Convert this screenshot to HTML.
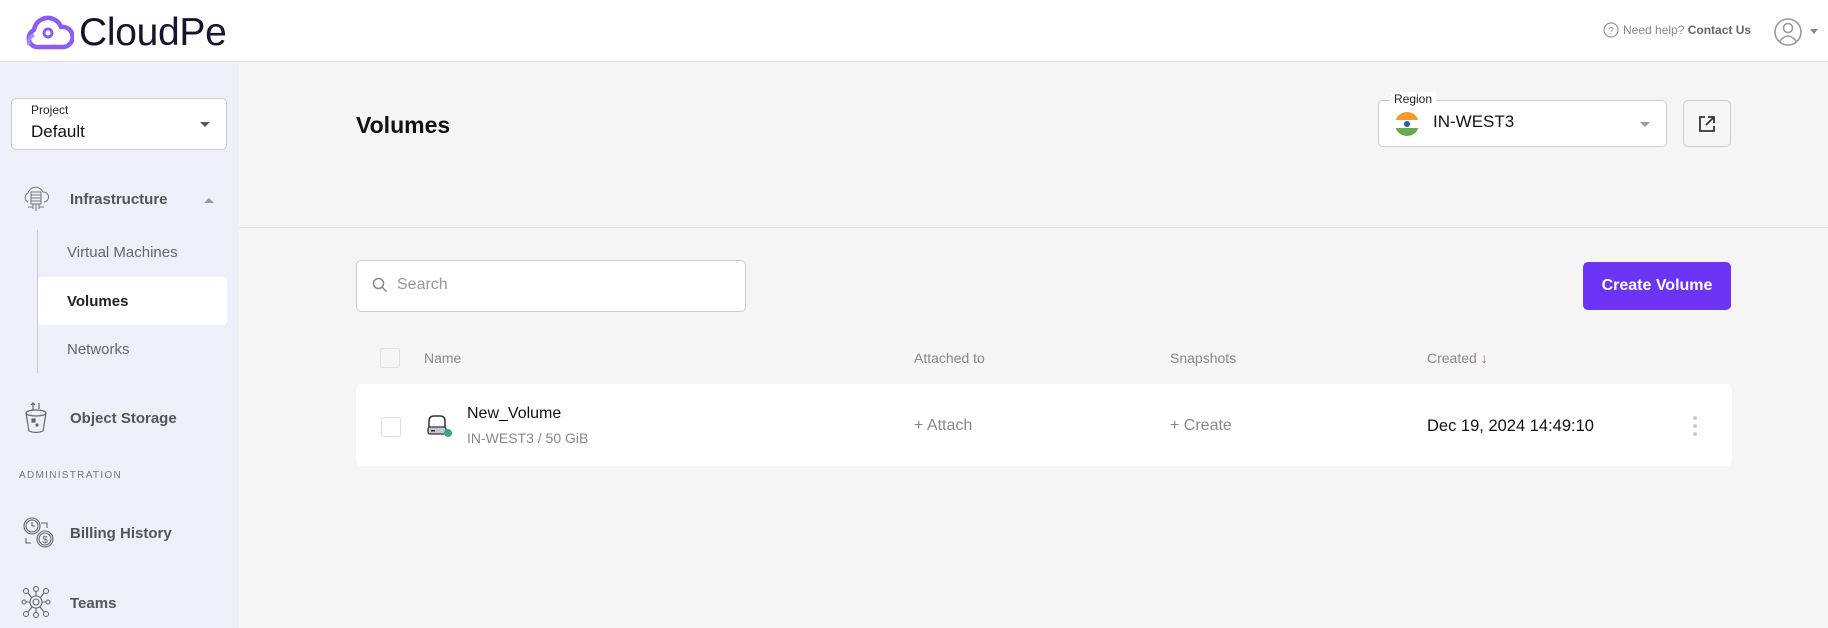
<!DOCTYPE html>
<html><head><meta charset="utf-8"><style>
*{box-sizing:border-box;margin:0;padding:0}
body{width:1828px;height:628px;overflow:hidden;background:#f5f5f5;font-family:"Liberation Sans",sans-serif;position:relative;color:#111}
.a{position:absolute;white-space:nowrap}
.hdr{left:0;top:0;width:1828px;height:62px;background:#fff;border-bottom:1px solid #e3e3e3}
.side{left:0;top:62px;width:239px;height:566px;background:#edf0fb}
.nav{font-size:15px;color:#555;font-weight:bold}
.sub{font-size:15px;color:#666}
.th{font-size:14px;color:#888;top:350px}
.cb{width:20px;height:20px;border:1px solid #dde0ea;border-radius:3px;background:#fff}
</style></head><body>
<div class="a hdr"></div>
<svg class="a" style="left:24px;top:15px" width="50" height="36" viewBox="0 0 50 36"><path d="M12 32 A9 9 0 0 1 10 15 A14 14 0 0 1 37 12 A10 10 0 0 1 40 32 Z" fill="none" stroke="#8b5cf6" stroke-width="4.5" stroke-linejoin="round"/><path d="M5 30 A8 8 0 0 1 10 20" fill="none" stroke="#a78bfa" stroke-width="3.5"/><circle cx="24" cy="18" r="4" fill="none" stroke="#8b5cf6" stroke-width="3"/></svg>
<div class="a" style="left:79px;top:11px;font-size:39px;color:#14142e;letter-spacing:-0.3px">CloudPe</div>
<svg class="a" style="left:1603px;top:22px" width="16" height="16"><circle cx="8" cy="8" r="7" fill="none" stroke="#999" stroke-width="1.2"/><text x="8" y="12" font-size="10" text-anchor="middle" fill="#999" font-family="Liberation Sans">?</text></svg>
<div class="a" style="left:1623px;top:23px;font-size:12px;color:#888">Need help? <b style="color:#666">Contact Us</b></div>
<svg class="a" style="left:1772px;top:16px" width="32" height="32"><circle cx="16" cy="16" r="13" fill="none" stroke="#999" stroke-width="1.6"/><circle cx="16" cy="12" r="4.5" fill="none" stroke="#999" stroke-width="1.6"/><path d="M8 25 Q16 15 24 25" fill="none" stroke="#999" stroke-width="1.6"/></svg>
<div class="a" style="left:1810px;top:29px;border:4px solid transparent;border-top:5px solid #888"></div>

<div class="a side"></div>
<div class="a" style="left:11px;top:98px;width:216px;height:52px;background:#fff;border:1px solid #ccc;border-radius:5px"></div>
<div class="a" style="left:31px;top:103px;font-size:12px;color:#222">Project</div>
<div class="a" style="left:31px;top:122px;font-size:17px;color:#111">Default</div>
<div class="a" style="left:200px;top:122px;border:5px solid transparent;border-top:5px solid #555"></div>

<svg class="a" style="left:22px;top:185px" width="28" height="30" viewBox="0 0 28 30" fill="none" stroke="#777" stroke-width="1"><path d="M6 17 A5 5 0 0 1 6 8 A8 8 0 0 1 21 7 A5 5 0 0 1 22 17"/><rect x="9" y="7" width="10" height="12"/><path d="M9 10h10M9 13h10M9 16h10M11 19v5M14 19v7M17 19v5M6 22h5M17 22h5"/></svg>
<div class="a nav" style="left:70px;top:191px">Infrastructure</div>
<div class="a" style="left:204px;top:193px;border:5px solid transparent;border-bottom:5px solid #999"></div>
<div class="a" style="left:37px;top:230px;width:1px;height:143px;background:#ccc"></div>
<div class="a sub" style="left:67px;top:244px">Virtual Machines</div>
<div class="a" style="left:38px;top:277px;width:189px;height:48px;background:#fff;border-radius:4px"></div>
<div class="a" style="left:67px;top:293px;font-size:15px;font-weight:bold;color:#222">Volumes</div>
<div class="a sub" style="left:67px;top:341px">Networks</div>

<svg class="a" style="left:24px;top:401px" width="26" height="34" viewBox="0 0 26 34" fill="none" stroke="#666" stroke-width="1.2"><ellipse cx="12" cy="12" rx="10" ry="3"/><path d="M2 12 L5 30 Q12 33 19 30 L22 12"/><path d="M9 9V2M7 4l2-2 2 2M15 2v6"/><rect x="8" y="18" width="3" height="3" fill="#666"/><circle cx="13" cy="24" r="1" fill="#666"/></svg>
<div class="a nav" style="left:70px;top:410px">Object Storage</div>
<div class="a" style="left:19px;top:470px;font-size:10px;color:#777;letter-spacing:1.3px">ADMINISTRATION</div>
<svg class="a" style="left:22px;top:516px" width="32" height="34" viewBox="0 0 32 34" fill="none" stroke="#666" stroke-width="1.1"><circle cx="10" cy="10" r="8"/><circle cx="10" cy="10" r="6"/><path d="M10 6v4h3"/><circle cx="23" cy="23" r="8"/><circle cx="23" cy="23" r="6"/><text x="23" y="27" font-size="10" text-anchor="middle" fill="#666" stroke="none">$</text><path d="M19 7h6v5M4 22v5h5"/></svg>
<div class="a nav" style="left:70px;top:525px">Billing History</div>
<svg class="a" style="left:21px;top:586px" width="30" height="32" viewBox="0 0 30 32" fill="none" stroke="#666" stroke-width="1.1"><circle cx="15" cy="16" r="6"/><circle cx="15" cy="16" r="3"/><circle cx="5" cy="5" r="2.5"/><circle cx="15" cy="3" r="2.5"/><circle cx="25" cy="5" r="2.5"/><circle cx="3" cy="16" r="2"/><circle cx="27" cy="16" r="2"/><circle cx="5" cy="28" r="2.5"/><circle cx="15" cy="29" r="2.5"/><circle cx="25" cy="28" r="2.5"/><path d="M7 7l4 5M15 5v5M23 7l-4 5M5 16h4M21 16h4M7 26l4-5M15 27v-5M23 26l-4-5"/></svg>
<div class="a nav" style="left:70px;top:595px">Teams</div>

<div class="a" style="left:356px;top:112px;font-size:23px;font-weight:bold;color:#111">Volumes</div>
<div class="a" style="left:1378px;top:100px;width:289px;height:47px;background:#fff;border:1px solid #ccc;border-radius:5px"></div>
<div class="a" style="left:1390px;top:92px;font-size:12px;color:#222;background:#fff;padding:0 4px;line-height:14px">Region</div>
<svg class="a" style="left:1395px;top:112px" width="24" height="24"><clipPath id="c"><circle cx="12" cy="12" r="12"/></clipPath><g clip-path="url(#c)"><rect width="24" height="8" fill="#f49b2c"/><rect y="8" width="24" height="8" fill="#fff"/><rect y="16" width="24" height="8" fill="#6aa84f"/></g><circle cx="12" cy="12" r="3" fill="#2a5aa8"/></svg>
<div class="a" style="left:1433px;top:112px;font-size:17px;color:#111">IN-WEST3</div>
<div class="a" style="left:1640px;top:122px;border:5px solid transparent;border-top:5px solid #999"></div>
<div class="a" style="left:1683px;top:100px;width:48px;height:47px;background:#f5f5f5;border:1px solid #ccc;border-radius:5px"></div>
<svg class="a" style="left:1697px;top:114px" width="20" height="20" fill="none" stroke="#333" stroke-width="1.8"><path d="M8 3H3v14h14v-5M11 3h6v6M17 3l-8 8"/></svg>
<div class="a" style="left:239px;top:227px;width:1589px;height:1px;background:#ddd"></div>

<div class="a" style="left:356px;top:260px;width:390px;height:52px;background:#fff;border:1px solid #ccc;border-radius:5px"></div>
<svg class="a" style="left:372px;top:277px" width="16" height="16" fill="none" stroke="#888" stroke-width="1.5"><circle cx="6.5" cy="6.5" r="5"/><path d="M10 10l4.5 4.5"/></svg>
<div class="a" style="left:397px;top:276px;font-size:16px;color:#999">Search</div>
<div class="a" style="left:1583px;top:262px;width:148px;height:48px;background:#6c35f5;border-radius:5px;color:#fff;font-size:16px;font-weight:bold;text-align:center;line-height:48px">Create Volume</div>

<div class="a cb" style="left:380px;top:348px;background:#f5f5f5"></div>
<div class="a th" style="left:424px">Name</div>
<div class="a th" style="left:914px">Attached to</div>
<div class="a th" style="left:1170px">Snapshots</div>
<div class="a th" style="left:1427px">Created <span style="color:#a0674a">↓</span></div>

<div class="a" style="left:356px;top:384px;width:1376px;height:82px;background:#fff;border-radius:6px"></div>
<div class="a cb" style="left:381px;top:417px"></div>
<svg class="a" style="left:426px;top:413px" width="28" height="28"><path d="M3 20 V8 Q3 3 8 3 H14 Q19 3 19 8 V20" fill="none" stroke="#333" stroke-width="1.5"/><rect x="2" y="14" width="18" height="7" rx="2" fill="#c7c7d0" stroke="#333" stroke-width="1.3"/><rect x="5" y="17" width="4" height="1.5" fill="#333"/><circle cx="22" cy="20" r="4" fill="#3aa88f"/></svg>
<div class="a" style="left:467px;top:405px;font-size:16px;color:#111">New_Volume</div>
<div class="a" style="left:467px;top:430px;font-size:14px;color:#888">IN-WEST3 / 50 GiB</div>
<div class="a" style="left:914px;top:417px;font-size:16px;color:#888">+ Attach</div>
<div class="a" style="left:1170px;top:417px;font-size:16px;color:#888">+ Create</div>
<div class="a" style="left:1427px;top:417px;font-size:16.5px;color:#111">Dec 19, 2024 14:49:10</div>
<div class="a" style="left:1693px;top:416px;width:4px;height:4px;border-radius:2px;background:#ccc;box-shadow:0 8px 0 #ccc,0 16px 0 #ccc"></div>
</body></html>
